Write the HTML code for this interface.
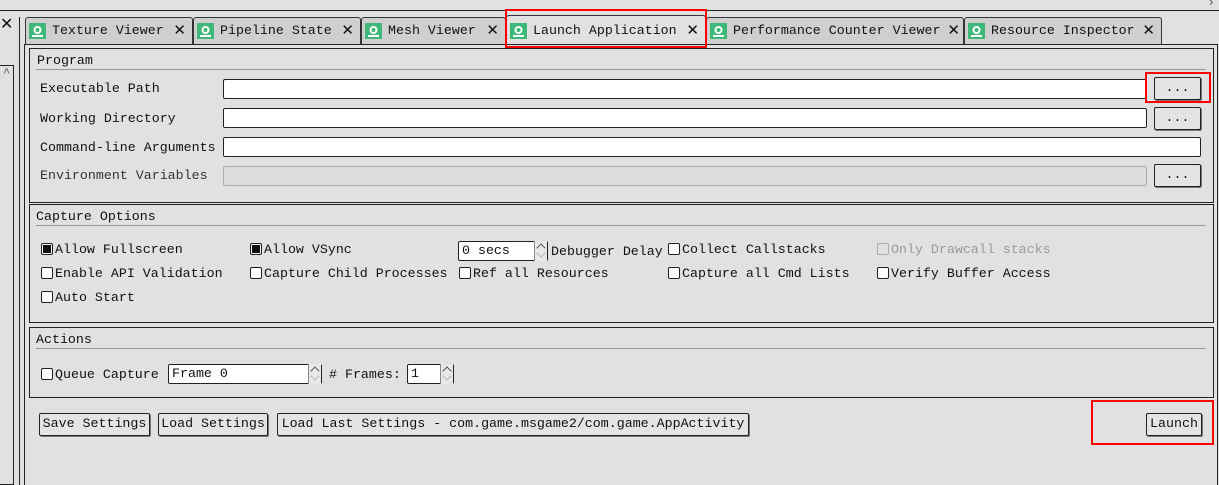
<!DOCTYPE html>
<html><head><meta charset="utf-8"><style>
*{box-sizing:border-box;margin:0;padding:0}
body{width:1219px;height:485px;background:#e1e1e1;font-family:"Liberation Mono","Noto Sans CJK SC",monospace;font-size:13.3px;color:#111;position:relative;overflow:hidden}
.a{position:absolute;white-space:nowrap}
.tab{position:absolute;top:17px;height:27px;background:#cfcfcf;border:1px solid #333;border-bottom:none;border-radius:3px 3px 0 0;}
.tab.act{background:#e1e1e1;top:15px;height:29px}
.ic{position:absolute;left:3px;top:5px;width:17px;height:16px;background:#3cb878}
.tab .t{position:absolute;left:26px;top:5px}
.tab .x{position:absolute;right:6px;top:3px;font-size:15px;font-family:"DejaVu Sans",sans-serif}
.grp{position:absolute;left:29px;right:5px;border:1px solid #222;}
.gl{position:absolute;left:6px;right:7px;height:1px;background:#999}
.in{position:absolute;height:20px;background:#fff;border:1px solid #222;border-radius:2px}
.btn{position:absolute;height:23px;background:#e4e4e4;border:1px solid #222;border-radius:2px;box-shadow:1px 1px 0 #777;text-align:center;line-height:20px}
.cb{display:inline-block;width:12px;height:12px;border:1px solid #222;border-radius:2px;vertical-align:-2px;margin-right:2px;background:#fff}
.cb.on{background:#111;box-shadow:inset 0 0 0 1px #fff}
.sp{position:absolute;width:13px;height:20px;border-left:1px solid #888;background:#e8e8e8}
.sp:before{content:"";position:absolute;left:2px;top:3px;width:7px;height:7px;border-left:1.5px solid #333;border-top:1.5px solid #333;transform:rotate(45deg) scale(.8);transform-origin:center}
.sp:after{content:"";position:absolute;left:2px;top:8px;width:7px;height:7px;border-right:1.5px solid #aaa;border-bottom:1.5px solid #aaa;transform:rotate(45deg) scale(.8)}
</style></head><body>
<div class="a" style="left:0;top:10px;width:1219px;height:1px;background:#222"></div>
<div class="a" style="right:4px;top:-5px;font-size:13px;color:#555">›</div>
<div class="a" style="left:0;top:14px;font-size:16px;font-family:'DejaVu Sans',sans-serif">✕</div>
<div class="a" style="left:0;top:65px;width:14px;height:420px;border:1px solid #222;border-left:none"></div>
<div class="a" style="left:3px;top:66px;font-size:12px;color:#555">^</div>
<div class="a" style="left:19px;top:17px;width:1px;height:468px;background:#222"></div>
<div class="a" style="left:24px;top:44px;width:1194px;height:441px;border:1px solid #222;border-bottom:none"></div>

<div class="tab" style="left:25px;width:168px"><div class="ic"><svg width="17" height="16"><circle cx="8.5" cy="7" r="3" fill="none" stroke="#fff" stroke-width="2"/><path d="M3 13h11" stroke="#fff" stroke-width="2"/></svg></div><span class="t">Texture Viewer</span><span class="x">✕</span></div>
<div class="tab" style="left:193px;width:168px"><div class="ic"><svg width="17" height="16"><circle cx="8.5" cy="7" r="3" fill="none" stroke="#fff" stroke-width="2"/><path d="M3 13h11" stroke="#fff" stroke-width="2"/></svg></div><span class="t">Pipeline State</span><span class="x">✕</span></div>
<div class="tab" style="left:361px;width:145px"><div class="ic"><svg width="17" height="16"><circle cx="8.5" cy="7" r="3" fill="none" stroke="#fff" stroke-width="2"/><path d="M3 13h11" stroke="#fff" stroke-width="2"/></svg></div><span class="t">Mesh Viewer</span><span class="x">✕</span></div>
<div class="tab act" style="left:506px;width:200px"><div class="ic" style="top:7px"><svg width="17" height="16"><circle cx="8.5" cy="7" r="3" fill="none" stroke="#fff" stroke-width="2"/><path d="M3 13h11" stroke="#fff" stroke-width="2"/></svg></div><span class="t" style="top:7px">Launch Application</span><span class="x" style="top:5px">✕</span></div>
<div class="tab" style="left:706px;width:258px"><div class="ic"><svg width="17" height="16"><circle cx="8.5" cy="7" r="3" fill="none" stroke="#fff" stroke-width="2"/><path d="M3 13h11" stroke="#fff" stroke-width="2"/></svg></div><span class="t">Performance Counter Viewer</span><span class="x" style="right:3px">✕</span></div>
<div class="tab" style="left:964px;width:198px"><div class="ic"><svg width="17" height="16"><circle cx="8.5" cy="7" r="3" fill="none" stroke="#fff" stroke-width="2"/><path d="M3 13h11" stroke="#fff" stroke-width="2"/></svg></div><span class="t">Resource Inspector</span><span class="x">✕</span></div>
<div class="a" style="left:505px;top:9px;width:202px;height:39px;border:2px solid #f00"></div>

<div class="grp" style="top:48px;height:155px">
 <div class="a" style="left:7px;top:4px">Program</div><div class="gl" style="top:20px"></div>
 <div class="a" style="left:10px;top:32px">Executable Path</div>
 <div class="a" style="left:10px;top:62px">Working Directory</div>
 <div class="a" style="left:10px;top:91px">Command-line Arguments</div>
 <div class="a" style="left:10px;top:119px;color:#333">Environment Variables</div>
</div>
<div class="in" style="left:223px;top:79px;width:924px"></div>
<div class="in" style="left:223px;top:108px;width:924px"></div>
<div class="in" style="left:223px;top:137px;width:978px"></div>
<div class="in" style="left:223px;top:166px;width:924px;background:#dcdcdc;border-color:#aaa"></div>
<div class="btn" style="left:1154px;top:77px;width:47px">...</div>
<div class="btn" style="left:1154px;top:107px;width:47px">...</div>
<div class="btn" style="left:1154px;top:164px;width:47px">...</div>
<div class="a" style="left:1145px;top:72px;width:66px;height:31px;border:2px solid #f00"></div>

<div class="grp" style="top:204px;height:119px">
 <div class="a" style="left:6px;top:4px">Capture Options</div><div class="gl" style="top:20px"></div>
</div>
<div class="a" style="left:41px;top:242px"><span class="cb on"></span>Allow Fullscreen</div>
<div class="a" style="left:250px;top:242px"><span class="cb on"></span>Allow VSync</div>
<div class="in" style="left:458px;top:241px;width:90px;padding-left:3px;line-height:18px">0 secs<div class="sp" style="right:0;top:-1px"></div></div>
<div class="a" style="left:551px;top:244px">Debugger Delay</div>
<div class="a" style="left:668px;top:242px"><span class="cb"></span>Collect Callstacks</div>
<div class="a" style="left:877px;top:242px;color:#999"><span class="cb" style="border-color:#aaa;background:none"></span>Only Drawcall stacks</div>
<div class="a" style="left:41px;top:266px"><span class="cb"></span>Enable API Validation</div>
<div class="a" style="left:250px;top:266px"><span class="cb"></span>Capture Child Processes</div>
<div class="a" style="left:459px;top:266px"><span class="cb"></span>Ref all Resources</div>
<div class="a" style="left:668px;top:266px"><span class="cb"></span>Capture all Cmd Lists</div>
<div class="a" style="left:877px;top:266px"><span class="cb"></span>Verify Buffer Access</div>
<div class="a" style="left:41px;top:290px"><span class="cb"></span>Auto Start</div>

<div class="grp" style="top:327px;height:71px">
 <div class="a" style="left:6px;top:4px">Actions</div><div class="gl" style="top:20px"></div>
</div>
<div class="a" style="left:41px;top:367px"><span class="cb"></span>Queue Capture</div>
<div class="in" style="left:168px;top:364px;width:154px;padding-left:3px;line-height:18px">Frame 0<div class="sp" style="right:0;top:-1px"></div></div>
<div class="a" style="left:329px;top:367px"># Frames:</div>
<div class="in" style="left:407px;top:364px;width:47px;padding-left:3px;line-height:18px">1<div class="sp" style="right:0;top:-1px"></div></div>

<div class="btn" style="left:39px;top:413px;width:111px">Save Settings</div>
<div class="btn" style="left:158px;top:413px;width:110px">Load Settings</div>
<div class="btn" style="left:277px;top:413px;width:472px">Load Last Settings - com.game.msgame2/com.game.AppActivity</div>
<div class="btn" style="left:1146px;top:413px;width:56px">Launch</div>
<div class="a" style="left:1091px;top:400px;width:123px;height:45px;border:2px solid #f00"></div>
</body></html>
